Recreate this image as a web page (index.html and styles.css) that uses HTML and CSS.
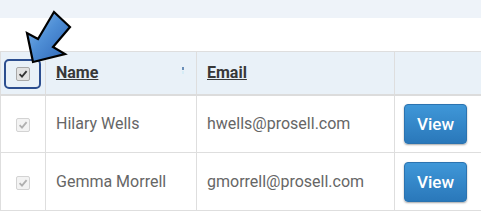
FILE: index.html
```html
<!DOCTYPE html>
<html>
<head>
<meta charset="utf-8">
<link rel="stylesheet" href="styles.css">
</head>
<body>
<div class="topband"></div>
<div class="gap"></div>
<table class="grid">
  <colgroup>
    <col class="c1"><col class="c2"><col class="c3"><col class="c4">
  </colgroup>
  <thead>
    <tr>
      <th class="cb-cell"><span class="cb cb-head"><svg viewBox="0 0 10 10" class="tick"><path d="M1.6 5.2 L4 7.6 L8.6 2.2" /></svg></span></th>
      <th><div class="th-inner"><a class="sortlink">Name</a><span class="sorticon"></span></div></th>
      <th><a class="sortlink">Email</a></th>
      <th class="last"></th>
    </tr>
  </thead>
  <tbody>
    <tr>
      <td class="cb-cell"><span class="cb"><svg viewBox="0 0 10 10" class="tick"><path d="M1.6 5.2 L4 7.6 L8.6 2.2" /></svg></span></td>
      <td>Hilary Wells</td>
      <td>hwells@prosell.com</td>
      <td class="btn-cell last"><button class="view">View</button></td>
    </tr>
    <tr>
      <td class="cb-cell"><span class="cb"><svg viewBox="0 0 10 10" class="tick"><path d="M1.6 5.2 L4 7.6 L8.6 2.2" /></svg></span></td>
      <td>Gemma Morrell</td>
      <td>gmorrell@prosell.com</td>
      <td class="btn-cell last"><button class="view">View</button></td>
    </tr>
  </tbody>
</table>
<div class="highlight"></div>
<svg class="arrow" width="80" height="70" viewBox="0 0 80 70">
  <defs>
    <linearGradient id="ag" x1="0" y1="0" x2="1" y2="1">
      <stop offset="0" stop-color="#8bbcec"/>
      <stop offset="0.45" stop-color="#4f8fd6"/>
      <stop offset="1" stop-color="#2b62b4"/>
    </linearGradient>
  </defs>
  <polygon points="54,12 70,27 53,47 65,54 33,62 27,33 38,39" fill="url(#ag)" stroke="#000" stroke-width="2.2" stroke-linejoin="miter"/>
</svg>
</body>
</html>
```
FILE: styles.css
```css
html, body {
  margin: 0;
  padding: 0;
  background: #ffffff;
  font-family: Roboto, "Liberation Sans", Arial, sans-serif;
}
body {
  position: relative;
  width: 481px;
  height: 212px;
  overflow: hidden;
}
.topband {
  height: 18px;
  background: #eef3f9;
}
.gap {
  height: 33px;
}
.grid {
  border-collapse: collapse;
  table-layout: fixed;
  width: 100%;
}
.c1 { width: 45px; }
.c2 { width: 151px; }
.c3 { width: 198px; }
.grid th, .grid td {
  border: 1px solid #dedede;
  padding: 0 0 0 10px;
  text-align: left;
  vertical-align: middle;
  font-size: 16px;
}
.grid .last {
  border-right: none;
}
.grid thead tr {
  height: 43px;
  background: #e9f1f8;
}
.grid thead th {
  border-bottom: 2px solid #dcdcdc;
  font-weight: 700;
  color: #383838;
}
.grid tbody tr {
  height: 58px;
}
.grid tbody td {
  color: #666666;
}
.grid .cb-cell {
  padding: 0;
  text-align: center;
}
.th-inner {
  display: flex;
  justify-content: space-between;
  align-items: center;
  padding-right: 12px;
}
.sortlink {
  text-decoration: underline;
  color: #383838;
}
.sorticon {
  width: 2px;
  height: 3px;
  background: #6b8fb8;
  margin-top: -9px;
  box-shadow: 0 4px 0 0 #d6ecf6;
}
.cb {
  display: inline-flex;
  align-items: center;
  justify-content: center;
  width: 12px;
  height: 12px;
  border: 1px solid #d3d3d3;
  border-radius: 2px;
  background: #f3f3f3;
  vertical-align: middle;
}
.cb-head {
  background: #e2e2e2;
  border-color: #a9a9a9;
}
.tick {
  width: 10px;
  height: 10px;
  fill: none;
  stroke: #b0b0b0;
  stroke-width: 1.8;
}
.cb-head .tick {
  stroke: #333333;
}
.grid .btn-cell {
  padding-left: 9px;
}
.view {
  width: 63px;
  height: 40px;
  border: 1px solid #2b73b0;
  border-radius: 4px;
  background: linear-gradient(#3f97d8, #2a78ba);
  box-shadow: 0 1px 2px rgba(0, 0, 0, 0.35);
  color: #ffffff;
  font-family: Roboto, "Liberation Sans", Arial, sans-serif;
  font-size: 17px;
  font-weight: 500;
  padding: 0;
}
.highlight {
  position: absolute;
  left: 4px;
  top: 59px;
  width: 33px;
  height: 26px;
  border: 2px solid #2c4e8f;
  border-radius: 5px;
}
.arrow {
  position: absolute;
  left: 0;
  top: 0;
}
```
